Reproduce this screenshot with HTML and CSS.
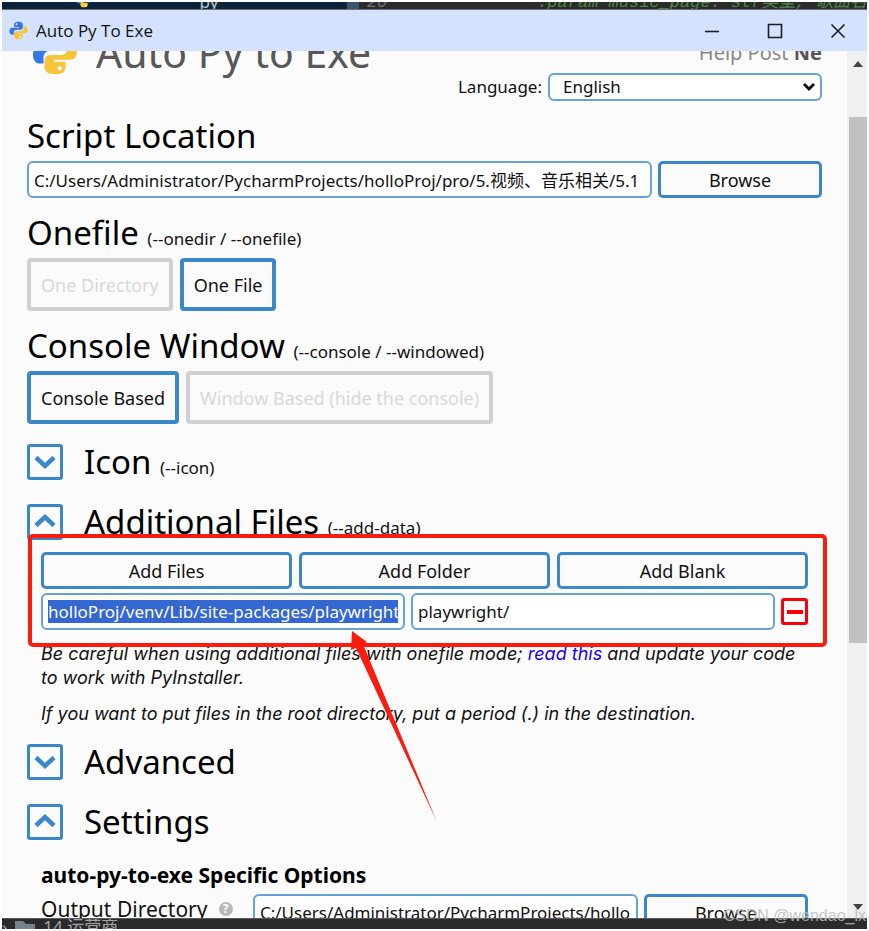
FILE: index.html
```html
<!DOCTYPE html>
<html lang="en">
<head>
<meta charset="utf-8">
<title>Auto Py To Exe</title>
<link rel="stylesheet" href="styles.css">
</head>
<body>
<svg class="defs" aria-hidden="true">
  <symbol id="python" viewBox="0 0 48 48">
    <path fill="#3578e5" d="M24 2C15 2 13 5 13 10v5h12v2H8c-5 0-7 4-7 9s3 9 7 9h4v-6c0-5 3-7 7-7h10c4 0 6-3 6-6v-6c0-5-3-8-11-8z"/>
    <circle cx="19" cy="8" r="2.2" fill="#fbfbfb"/>
    <path fill="#f8c53a" d="M24 46c9 0 11-3 11-8v-5H23v-2h17c5 0 7-4 7-9s-3-9-7-9h-3v6c0 5-3 7-7 7H19c-4 0-6 3-6 6v6c0 5 3 8 11 8z"/>
    <circle cx="29" cy="40" r="2.2" fill="#fbfbfb"/>
  </symbol>
  <symbol id="down" viewBox="0 0 24 24"><path fill="none" stroke="#3c87c7" stroke-width="4.500" d="M3 7.500l9 8.500 9-8.500"/></symbol>
  <symbol id="up" viewBox="0 0 24 24"><path fill="none" stroke="#3c87c7" stroke-width="4.500" d="M3 15.500l9-8.500 9 8.500"/></symbol>
</svg>
<div class="screen">
  <div class="strip strip-top">
    <div class="strip-tab"><svg class="strip-logo"><use href="#python"/></svg><span>_</span><span class="strip-py">py</span></div>
    <div class="strip-gap"></div>
    <div class="strip-code"><span class="strip-line">20</span><span class="strip-comment">.param music_page. str类型, 歌曲名</span></div>
  </div>

  <header class="titlebar">
    <svg class="titlebar-logo"><use href="#python"/></svg>
    <span class="titlebar-name">Auto Py To Exe</span>
    <button class="winbtn" aria-label="Minimize"><svg viewBox="0 0 16 16"><path d="M1 8.500h14"/></svg></button>
    <button class="winbtn" aria-label="Maximize"><svg viewBox="0 0 16 16"><path d="M1.500 1.500h13v13h-13z"/></svg></button>
    <button class="winbtn" aria-label="Close"><svg viewBox="0 0 16 16"><path d="M1.500 1.500l13 13M14.500 1.500l-13 13"/></svg></button>
  </header>

  <div class="view">
    <main class="content">
      <div class="top">
        <div class="brand"><svg class="brand-logo"><use href="#python"/></svg><h1>Auto Py to Exe</h1></div>
        <div class="top-side">
          <a class="help" href="#help">Help Post <b>Ne</b></a>
          <div class="language">
            <label for="lang">Language:</label>
            <span class="select"><select id="lang"><option>English</option></select><svg viewBox="0 0 14 10"><path d="M2 2l5 5 5-5"/></svg></span>
          </div>
        </div>
      </div>

      <section class="group">
        <h2><label for="script">Script Location</label></h2>
        <div class="row">
          <input class="field" id="script" type="text" value="C:/Users/Administrator/PycharmProjects/holloProj/pro/5.视频、音乐相关/5.1">
          <button class="btn browse">Browse</button>
        </div>
      </section>

      <section class="group">
        <h2>Onefile <small>(--onedir / --onefile)</small></h2>
        <div class="choices">
          <button class="choice off">One Directory</button>
          <button class="choice">One File</button>
        </div>
      </section>

      <section class="group">
        <h2>Console Window <small>(--console / --windowed)</small></h2>
        <div class="choices">
          <button class="choice">Console Based</button>
          <button class="choice off">Window Based (hide the console)</button>
        </div>
      </section>

      <section class="fold first">
        <div class="fold-head"><button class="toggle" aria-label="Expand Icon"><svg><use href="#down"/></svg></button><h2>Icon <small>(--icon)</small></h2></div>
      </section>

      <section class="fold">
        <div class="fold-head"><button class="toggle" aria-label="Collapse Additional Files"><svg><use href="#up"/></svg></button><h2>Additional Files <small>(--add-data)</small></h2></div>
        <div class="fold-body files">
          <div class="adders">
            <button class="btn">Add Files</button>
            <button class="btn">Add Folder</button>
            <button class="btn">Add Blank</button>
          </div>
          <div class="row pair">
            <input class="field selected" type="text" aria-label="Source" value="holloProj/venv/Lib/site-packages/playwright">
            <input class="field" type="text" aria-label="Destination" value="playwright/">
            <button class="remove" aria-label="Remove"><svg viewBox="0 0 16 4"><path d="M0 2h16"/></svg></button>
          </div>
          <div class="mark"></div>
          <svg class="arrow" viewBox="0 0 90 194"><path fill="#fb1c10" d="M1 1L16 12 12 14 86 192 5 18 0 20z"/></svg>
        </div>
        <div class="fold-body notes">
          <p>Be careful when using additional files with onefile mode; <a href="#read">read this</a> and update your code to work with PyInstaller.</p>
          <p>If you want to put files in the root directory, put a period (.) in the destination.</p>
        </div>
      </section>

      <section class="fold after-notes">
        <div class="fold-head"><button class="toggle" aria-label="Expand Advanced"><svg><use href="#down"/></svg></button><h2>Advanced</h2></div>
      </section>

      <section class="fold">
        <div class="fold-head"><button class="toggle" aria-label="Collapse Settings"><svg><use href="#up"/></svg></button><h2>Settings</h2></div>
        <div class="fold-body settings">
          <h3>auto-py-to-exe Specific Options</h3>
          <div class="row">
            <div class="option"><label for="out">Output Directory</label><span class="hint">?</span></div>
            <input class="field" id="out" type="text" value="C:/Users/Administrator/PycharmProjects/holloProj">
            <button class="btn browse">Browse</button>
          </div>
        </div>
      </section>
    </main>
    <div class="scrollbar">
      <svg viewBox="0 0 10 6"><path d="M0 6l5-6 5 6z"/></svg>
      <div class="thumb"></div>
      <svg viewBox="0 0 10 6"><path d="M0 0l5 6 5-6z"/></svg>
    </div>
  </div>

  <div class="strip strip-bottom"><span class="chev">›</span><svg class="folder" viewBox="0 0 20 16"><path fill="#76818a" d="M0 0h8l3 3h9v13H0z"/></svg><span>14 运营商</span></div>
  <div class="watermark">CSDN @wendao_lx</div>
</div>
</body>
</html>
```
FILE: styles.css
```css
* { box-sizing: border-box; }
body {
  margin: 0;
  padding: 2px;
  height: 100vh;
  background: #fff;
  color: #111;
  font: 17px/24px "Noto Sans", "Noto Sans CJK SC", sans-serif;
}
button, input, select { font: inherit; color: inherit; margin: 0; }
h1, h2, h3, p { margin: 0; font-weight: 400; }
.defs { position: absolute; width: 0; height: 0; }

.screen { position: relative; display: flex; flex-direction: column; height: 100%; overflow: hidden; }

.strip { display: flex; flex: none; overflow: hidden; background: #2b2b2b; }
.strip-top { height: 8px; border-bottom: 1px solid #6c7076; line-height: 8px; }
.strip-tab { display: flex; flex: 2; gap: 50px; padding-left: 74px; background: #0b2439; color: #b9c4cc; }
.strip-logo { width: 16px; height: 16px; margin-top: -10px; }
.strip-tab span { line-height: 0; }
.strip-gap { width: 12px; background: #3d5568; }
.strip-code { display: flex; flex: 3; gap: 150px; padding-left: 8px; font-family: "Liberation Mono", "Noto Sans CJK SC", monospace; font-style: italic; line-height: 2px; white-space: nowrap; }
.strip-line { color: #6b6f72; }
.strip-comment { color: #4c8548; }
.strip-bottom { height: 11px; gap: 8px; color: #a4a8ab; border-top: 1px solid #55595b; line-height: 16px; font-size: 17px; }
.folder { width: 20px; height: 16px; margin-top: 2px; }

.titlebar { display: flex; flex: none; align-items: center; height: 41px; padding-left: 7px; padding-right: 21px; background: #d4e2fd; }
.titlebar-logo { width: 19px; height: 19px; margin-right: 8px; }
.titlebar-name { flex: 1; font-family: "Open Sans", sans-serif; }
.winbtn { display: flex; padding: 0; margin-left: 47px; border: 0; background: none; }
.winbtn svg { width: 16px; height: 16px; fill: none; stroke: #1b1d22; stroke-width: 1.6; }

.view { display: flex; flex: 1; min-height: 0; background: #fbfbfb; }
.content { flex: 1; min-width: 0; padding: 0 25px; overflow: hidden; }

.scrollbar { display: flex; flex: none; flex-direction: column; align-items: center; width: 20px; padding: 10px 0 8px; background: #f0f0f0; }
.scrollbar svg { width: 10px; height: 6px; margin-left: 2px; fill: #444; }
.thumb { align-self: flex-end; width: 18px; height: 62%; margin: 50px 0 auto; background: #c1c1c1; }

.top { display: flex; justify-content: space-between; height: 50px; }
.brand { display: flex; align-items: flex-end; gap: 18px; height: 25px; padding-left: 5px; }
.brand-logo { flex: none; width: 46px; height: 46px; }
h1 { color: #585858; font-size: 41px; line-height: 48px; white-space: nowrap; }
.top-side { display: flex; flex-direction: column; justify-content: flex-end; gap: 8px; }
.help { align-self: flex-end; color: #888; font-size: 20px; text-decoration: none; }
.help b { color: #555; }
.language { display: flex; align-items: center; gap: 6px; }
.select { position: relative; display: flex; }
.select select { width: 274px; height: 28px; padding: 0 13px; border: 2px solid #65a2d6; border-radius: 6px; background: #fff; appearance: none; }
.select svg { position: absolute; right: 6px; top: 9px; width: 14px; height: 10px; fill: none; stroke: #111; stroke-width: 3; }

h2 { color: #000; font-size: 33px; line-height: 40px; white-space: nowrap; }
h2 small { color: #111; font-size: 17px; line-height: 20px; }
.group { display: flex; flex-direction: column; gap: 5px; margin-top: 15px; }

.row { display: flex; align-items: center; gap: 6px; }
.field { flex: 1; min-width: 0; height: 37px; padding: 5px; border: 2px solid #65a2d6; border-radius: 6px; background: #fff; }
.btn { height: 37px; padding: 0; border: 3px solid #3c87c7; border-radius: 5px; background: #fbfbfb; font-size: 18px; }
.browse { width: 164px; }

.choices { display: flex; gap: 7px; }
.choice { height: 53px; padding: 0 10px; border: 4px solid #3c87c7; border-radius: 4px; background: #fbfbfb; font-size: 18px; }
.choice.off { border-color: #d0d0d0; color: #d8d8d8; }

.fold { margin-top: 24px; }
.fold.first { margin-top: 20px; }
.fold.after-notes { margin-top: 18px; }
.fold-head { display: flex; align-items: center; gap: 21px; height: 36px; }
.toggle { display: flex; align-items: center; justify-content: center; width: 36px; height: 36px; padding: 0; border: 3px solid #3c87c7; border-radius: 3px; background: #fbfbfb; }
.toggle svg { width: 24px; height: 24px; }
.fold-body { padding: 0 14px; }

.files { position: relative; display: flex; flex-direction: column; gap: 4px; margin-top: 12px; }
.adders { display: grid; grid-template-columns: repeat(3, 1fr); gap: 7px; }
.field.selected { background: linear-gradient(#3467d1, #3467d1) content-box, #fff; color: #fff; }
.remove { display: flex; align-items: center; justify-content: center; width: 27px; height: 27px; padding: 0; border: 3px solid #f8000c; border-radius: 3px; background: #fbfbfb; }
.remove svg { width: 16px; height: 4px; stroke: #f8000c; stroke-width: 4; }
.mark { position: absolute; inset: -18px -5px -17px 1px; border: 4px solid #fb1c10; border-radius: 5px; pointer-events: none; }
.arrow { position: absolute; left: 324px; top: 78px; width: 90px; height: 194px; pointer-events: none; }

.notes { display: flex; flex-direction: column; gap: 12px; margin-top: 12px; font-family: Inter, sans-serif; font-size: 18px; font-style: italic; }
.notes a { color: #1a00ee; text-decoration: none; }

.settings { display: flex; flex-direction: column; gap: 7px; margin-top: 23px; }
h3 { color: #000; font-size: 21px; font-weight: 700; }
.option { display: flex; align-items: center; align-self: flex-start; gap: 11px; width: 206px; font-size: 21px; line-height: 30px; white-space: nowrap; }
.hint { width: 14px; height: 14px; border-radius: 50%; background: #b8b8b8; color: #fff; font-size: 12px; font-weight: 700; line-height: 14px; text-align: center; }

.watermark { position: absolute; right: 1px; bottom: 2px; color: #bbb; font: 16px/22px "Liberation Sans", sans-serif; opacity: .85; }
```
